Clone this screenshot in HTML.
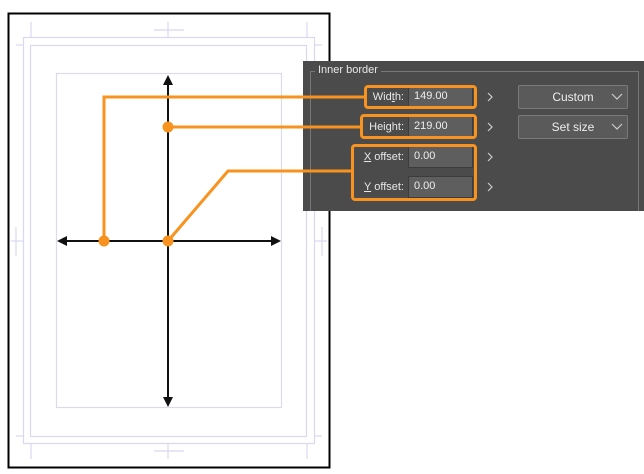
<!DOCTYPE html><html><head><style>
body{margin:0;width:644px;height:474px;background:#fff;position:relative;overflow:hidden;font-family:"Liberation Sans","Noto Sans CJK JP",sans-serif}
.a{position:absolute}
.panel{left:303px;top:61px;width:341px;height:150px;background:#4b4b4b}
.lbl{color:#e8e8e8;font-size:11px;text-align:right}
.inp{background:#5e5e5e;border:1px solid #3c3c3c;color:#eee;font-size:11px;padding-left:5px;box-sizing:border-box;line-height:18px;height:22px}
.ob{border:3px solid #f7931e;border-radius:4px;box-sizing:border-box}
.dd{background:#5a5a5a;border:1px solid #7a7a7a;border-radius:2px;color:#eee;font-size:12px;box-sizing:border-box;text-align:center;line-height:22px}
</style></head><body>
<svg class="a" style="left:0;top:0" width="644" height="474">
<rect x="8.5" y="13.5" width="321" height="454" fill="#fff" stroke="#000" stroke-width="2"/>
<g stroke="#d8d8f0" fill="none" stroke-width="1.2">
<rect x="23.5" y="37.5" width="291" height="406"/>
<rect x="30.5" y="45.5" width="276" height="391"/>
<line x1="16" y1="45" x2="23" y2="45"/><line x1="315" y1="45" x2="322" y2="45"/>
<line x1="16" y1="436" x2="23" y2="436"/><line x1="315" y1="436" x2="322" y2="436"/>
<line x1="31" y1="22" x2="31" y2="37"/><line x1="307" y1="22" x2="307" y2="37"/>
<line x1="31" y1="444" x2="31" y2="459"/><line x1="307" y1="444" x2="307" y2="459"/>
<line x1="154" y1="30" x2="184" y2="30"/><line x1="168" y1="22" x2="168" y2="37"/>
<line x1="154" y1="451" x2="184" y2="451"/><line x1="168" y1="444" x2="168" y2="459"/>
<line x1="16" y1="227" x2="16" y2="256"/><line x1="11" y1="241" x2="23" y2="241"/>
<line x1="322" y1="227" x2="322" y2="256"/><line x1="315" y1="241" x2="327" y2="241"/>
</g>
<rect x="56.5" y="73.5" width="225" height="334" fill="none" stroke="#dcdce8" stroke-width="1.2"/>
<g stroke="#111" stroke-width="2"><line x1="168" y1="82" x2="168" y2="400"/><line x1="64" y1="241" x2="274" y2="241"/></g>
<g fill="#111"><path d="M168 75l-5 10h10z"/><path d="M168 407l-5-10h10z"/><path d="M57 241l10-5v10z"/><path d="M281 241l-10-5v10z"/></g>
</svg>
<div class="a panel"></div>
<div class="a" style="left:310px;top:71px;width:329px;height:140px;border:1px solid #777;border-bottom:none;box-sizing:border-box"></div>
<div class="a" style="left:315px;top:64px;background:#4b4b4b;color:#e8e8e8;font-size:11px;padding:0 3px">Inner border</div>
<div class="a lbl" style="left:360px;top:91px;width:44px">Wid<u>t</u>h:</div>
<div class="a lbl" style="left:355px;top:121px;width:49px">Hei<u>g</u>ht:</div>
<div class="a lbl" style="left:350px;top:151px;width:54px"><u>X</u> offset:</div>
<div class="a lbl" style="left:350px;top:181px;width:54px"><u>Y</u> offset:</div>
<div class="a inp" style="left:408px;top:86px;width:65px">149.00</div>
<div class="a inp" style="left:408px;top:116px;width:65px">219.00</div>
<div class="a inp" style="left:408px;top:146px;width:65px">0.00</div>
<div class="a inp" style="left:408px;top:176px;width:65px">0.00</div>
<div class="a dd" style="left:518px;top:85px;width:110px;height:24px">Custom</div>
<div class="a dd" style="left:518px;top:115px;width:110px;height:24px">Set size</div>
<svg class="a" style="left:0;top:0" width="644" height="474">
<g stroke="#ccc" fill="none" stroke-width="1.2"><path d="M612 94l5 5 5-5"/><path d="M612 124l5 5 5-5"/>
<path d="M488 93l4 4-4 4"/><path d="M488 123l4 4-4 4"/><path d="M488 153l4 4-4 4"/><path d="M488 183l4 4-4 4"/></g>
<g stroke="#f7931e" stroke-width="3" fill="none"><path d="M104 241V97H366"/><path d="M168 127H361"/><path d="M168 241L228 171H353"/></g>
<g fill="#f7931e"><circle cx="104" cy="241" r="5.5"/><circle cx="168" cy="241" r="5.5"/><circle cx="168" cy="127" r="5.5"/></g>
</svg>
<div class="a ob" style="left:364px;top:85px;width:113px;height:24px"></div>
<div class="a ob" style="left:360px;top:114px;width:117px;height:25px"></div>
<div class="a ob" style="left:351px;top:144px;width:126px;height:57px"></div>
</body></html>
